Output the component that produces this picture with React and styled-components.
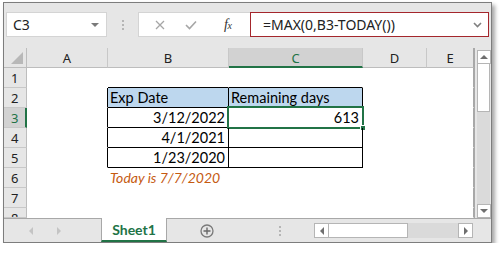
import React from 'react';
import styled, { createGlobalStyle, css } from 'styled-components';

const GlobalStyle = createGlobalStyle`
  html, body {
    margin: 0;
    padding: 0;
    background: #ffffff;
  }
  * {
    box-sizing: border-box;
  }
`;

const GREEN = '#217346';
const HDR = '#e6e6e6';

const Window = styled.div`
  margin: 2px 0 0 3px;
  width: 489px;
  height: 241px;
  border: 1px solid #7d7d7d;
  background: ${HDR};
  box-shadow: 3px 3px 4px rgba(0, 0, 0, 0.35);
  display: flex;
  flex-direction: column;
  overflow: hidden;
  font-family: 'Noto Sans', 'Open Sans', sans-serif;
`;

// Formula bar
const FormulaBar = styled.div`
  height: 45px;
  flex: none;
  display: flex;
  align-items: flex-start;
  padding: 9px 1px 0 2px;
`;

const NameBox = styled.div`
  width: 101px;
  height: 25px;
  background: #fff;
  border: 1px solid #d4d4d4;
  display: flex;
  align-items: center;
  justify-content: space-between;
  padding: 0 7px 0 6px;
  font-size: 14px;
  color: #222;
`;

const Caret = styled.span`
  width: 0;
  height: 0;
  border-left: 4px solid transparent;
  border-right: 4px solid transparent;
  border-top: 4px solid #7a7a7a;
`;

const Grip = styled.div`
  width: 31px;
  height: 25px;
  display: flex;
  flex-direction: column;
  align-items: center;
  justify-content: center;
  gap: 2px;
  span {
    width: 2px;
    height: 2px;
    background: #b5b5b5;
  }
`;

const ActionBox = styled.div`
  width: 112px;
  height: 25px;
  background: #fff;
  border: 1px solid #d4d4d4;
  border-right: none;
  display: flex;
  align-items: center;
  padding-left: 16px;
  gap: 20px;
`;

const Fx = styled.span`
  font-family: 'Liberation Serif', serif;
  font-style: italic;
  font-size: 14px;
  color: #333;
  margin-left: 7px;
  letter-spacing: -0.5px;
  small {
    font-size: 10px;
  }
`;

const FormulaInput = styled.div`
  width: 239px;
  height: 25px;
  background: #fff;
  border: 1px solid #a4262c;
  display: flex;
  align-items: center;
  justify-content: space-between;
  padding: 0 6px 0 12px;
  font-size: 14px;
  color: #222;
`;

// Grid
const Main = styled.div`
  height: 170px;
  flex: none;
  display: flex;
`;

const Sheet = styled.div`
  width: 470px;
  flex: none;
  display: grid;
  grid-template-columns: 23px 81px 121px 134px 64px 47px;
  grid-template-rows: 20px repeat(7, 20px) 10px;
  background: #fff;
  overflow: hidden;
`;

const Corner = styled.div`
  background: ${HDR};
  border-right: 1px solid #bdbdbd;
  border-bottom: 1px solid #bdbdbd;
  position: relative;
  &::after {
    content: '';
    position: absolute;
    right: 3px;
    bottom: 3px;
    width: 0;
    height: 0;
    border-left: 12px solid transparent;
    border-bottom: 12px solid #b8b8b8;
  }
`;

const ColHead = styled.div`
  background: ${p => (p.$active ? '#d2d2d2' : HDR)};
  border-right: 1px solid ${p => (p.$last ? '#a8a8a8' : '#c8c8c8')};
  border-bottom: ${p => (p.$active ? `2px solid ${GREEN}` : '1px solid #bdbdbd')};
  color: ${p => (p.$active ? GREEN : '#222')};
  font-size: 13px;
  display: flex;
  align-items: center;
  justify-content: center;
  padding-top: 1px;
`;

const RowHead = styled.div`
  background: ${p => (p.$active ? '#d2d2d2' : HDR)};
  border-right: ${p => (p.$active ? `2px solid ${GREEN}` : '1px solid #bdbdbd')};
  border-bottom: 1px solid #c8c8c8;
  color: ${p => (p.$active ? GREEN : '#222')};
  font-size: 13px;
  line-height: 16px;
  display: flex;
  align-items: flex-start;
  padding: 2px 0 0 7px;
  overflow: hidden;
`;

const Cell = styled.div`
  position: relative;
  border-right: 1px solid ${p => (p.$r ? '#000' : p.$edge ? '#a8a8a8' : 'transparent')};
  border-bottom: 1px solid ${p => (p.$b ? '#000' : 'transparent')};
  background: ${p => (p.$fill ? '#bdd7ee' : 'transparent')};
  font-family: 'Lato', 'Liberation Sans', sans-serif;
  font-size: 14.5px;
  color: #000;
  display: flex;
  align-items: flex-end;
  justify-content: ${p => (p.$num ? 'flex-end' : 'flex-start')};
  padding: 0 3px 1px 2px;
  white-space: nowrap;
  line-height: 17px;
  ${p =>
    p.$note &&
    css`
      font-style: italic;
      font-size: 14px;
      color: #c55a11;
      overflow: visible;
    `}
`;

const Selection = styled.div`
  position: absolute;
  top: -2px;
  left: -2px;
  right: -2px;
  bottom: -2px;
  border: 2px solid ${GREEN};
  pointer-events: none;
`;

const FillHandle = styled.div`
  position: absolute;
  right: -4px;
  bottom: -4px;
  width: 6px;
  height: 6px;
  background: ${GREEN};
  border: 1px solid #fff;
`;

// Vertical scrollbar
const VScroll = styled.div`
  width: 17px;
  flex: none;
  border-left: 1px solid #a8a8a8;
  padding: 2px 1px 0 2px;
  display: flex;
  flex-direction: column;
`;

const ScrollBtn = styled.div`
  width: 14px;
  height: 14px;
  flex: none;
  background: #fff;
  border: 1px solid #b5b5b5;
  display: flex;
  align-items: center;
  justify-content: center;
`;

const VThumb = styled.div`
  height: 48px;
  flex: none;
  background: #fff;
  border: 1px solid #b5b5b5;
  border-top: none;
`;

const VTrack = styled.div`
  flex: 1;
  background: #dadada;
`;

const Arrow = styled.span`
  width: 0;
  height: 0;
  ${p =>
    p.$dir === 'up' &&
    css`
      border-left: 4px solid transparent;
      border-right: 4px solid transparent;
      border-bottom: 4px solid #6f6f6f;
    `}
  ${p =>
    p.$dir === 'down' &&
    css`
      border-left: 4px solid transparent;
      border-right: 4px solid transparent;
      border-top: 4px solid #6f6f6f;
    `}
  ${p =>
    p.$dir === 'left' &&
    css`
      border-top: 4px solid transparent;
      border-bottom: 4px solid transparent;
      border-right: 4px solid ${p.$light ? '#c4c4c4' : '#6f6f6f'};
    `}
  ${p =>
    p.$dir === 'right' &&
    css`
      border-top: 4px solid transparent;
      border-bottom: 4px solid transparent;
      border-left: 4px solid ${p.$light ? '#c4c4c4' : '#6f6f6f'};
    `}
`;

// Tab bar
const TabBar = styled.div`
  height: 24px;
  flex: none;
  border-top: 1px solid #a8a8a8;
  display: flex;
  align-items: stretch;
`;

const TabNav = styled.div`
  width: 97px;
  flex: none;
  display: flex;
  align-items: center;
  padding-left: 25px;
  gap: 24px;
`;

const Tab = styled.div`
  width: 66px;
  flex: none;
  margin-top: -1px;
  background: #fff;
  border-left: 1px solid #a8a8a8;
  border-right: 1px solid #a8a8a8;
  border-bottom: 2px solid ${GREEN};
  color: ${GREEN};
  font-family: 'Lato', 'Liberation Sans', sans-serif;
  font-weight: 700;
  font-size: 14px;
  display: flex;
  align-items: center;
  justify-content: center;
  padding-top: 1px;
`;

const AddSheet = styled.div`
  width: 80px;
  flex: none;
  display: flex;
  align-items: center;
  padding-left: 33px;
`;

const HGrip = styled.div`
  width: 67px;
  flex: none;
  display: flex;
  flex-direction: column;
  align-items: center;
  justify-content: center;
  gap: 2px;
  padding-right: 2px;
  span {
    width: 2px;
    height: 2px;
    background: #b5b5b5;
  }
`;

const HScroll = styled.div`
  width: 159px;
  height: 15px;
  flex: none;
  align-self: center;
  display: flex;
`;

const HBtn = styled(ScrollBtn)`
  width: 15px;
  height: 15px;
`;

const HThumb = styled.div`
  width: 79px;
  background: #fff;
  border: 1px solid #b5b5b5;
  border-left: none;
`;

const HTrack = styled.div`
  flex: 1;
  background: #dadada;
`;

const cols = ['A', 'B', 'C', 'D', 'E'];

const rows = [
  [null, null, null, null, null],
  [null, { t: 'Exp Date', fill: true }, { t: 'Remaining days', fill: true }, null, null],
  [null, { t: '3/12/2022', num: true }, { t: '613', num: true, sel: true }, null, null],
  [null, { t: '4/1/2021', num: true }, {}, null, null],
  [null, { t: '1/23/2020', num: true }, {}, null, null],
  [null, { t: 'Today is 7/7/2020', note: true }, null, null, null],
  [null, null, null, null, null],
  [null, null, null, null, null],
];

// table B2:C5 lives in rows 1..4 (0-based), cols 1..2
const inTable = (r, c) => r >= 1 && r <= 4 && c >= 1 && c <= 2;

const App = () => (
  <>
    <GlobalStyle />
    <Window>
      <FormulaBar>
        <NameBox>
          C3
          <Caret />
        </NameBox>
        <Grip>
          <span />
          <span />
          <span />
        </Grip>
        <ActionBox>
          <svg width="10" height="10" viewBox="0 0 10 10">
            <path d="M1 1 L9 9 M9 1 L1 9" stroke="#a6a6a6" strokeWidth="1.3" fill="none" />
          </svg>
          <svg width="12" height="10" viewBox="0 0 12 10">
            <path d="M1 5 L4.5 8.5 L11 1.5" stroke="#a6a6a6" strokeWidth="1.6" fill="none" />
          </svg>
          <Fx>
            f<small>x</small>
          </Fx>
        </ActionBox>
        <FormulaInput>
          =MAX(0,B3-TODAY())
          <svg width="9" height="6" viewBox="0 0 9 6">
            <path d="M1 1 L4.5 4.5 L8 1" stroke="#808080" strokeWidth="1.6" fill="none" />
          </svg>
        </FormulaInput>
      </FormulaBar>

      <Main>
        <Sheet>
          <Corner />
          {cols.map((c, i) => (
            <ColHead key={c} $active={c === 'C'} $last={i === cols.length - 1}>
              {c}
            </ColHead>
          ))}
          {rows.map((row, r) => (
            <React.Fragment key={r}>
              <RowHead $active={r === 2}>{r + 1}</RowHead>
              {row.map((cell, c) => {
                const d = cell || {};
                const table = inTable(r, c);
                return (
                  <Cell
                    key={c}
                    $r={table || (c === 0 && r >= 1 && r <= 4)}
                    $b={table || (r === 0 && (c === 1 || c === 2))}
                    $edge={c === 4}
                    $fill={d.fill}
                    $num={d.num}
                    $note={d.note}
                  >
                    {d.t}
                    {d.sel && (
                      <Selection>
                        <FillHandle />
                      </Selection>
                    )}
                  </Cell>
                );
              })}
            </React.Fragment>
          ))}
        </Sheet>
        <VScroll>
          <ScrollBtn>
            <Arrow $dir="up" />
          </ScrollBtn>
          <VThumb />
          <VTrack />
          <ScrollBtn>
            <Arrow $dir="down" />
          </ScrollBtn>
        </VScroll>
      </Main>

      <TabBar>
        <TabNav>
          <Arrow $dir="left" $light />
          <Arrow $dir="right" $light />
        </TabNav>
        <Tab>Sheet1</Tab>
        <AddSheet>
          <svg width="14" height="14" viewBox="0 0 14 14">
            <circle cx="7" cy="7" r="6" stroke="#7a7a7a" strokeWidth="1.3" fill="none" />
            <path d="M7 3.5 V10.5 M3.5 7 H10.5" stroke="#6a6a6a" strokeWidth="1.4" />
          </svg>
        </AddSheet>
        <HGrip>
          <span />
          <span />
          <span />
        </HGrip>
        <HScroll>
          <HBtn>
            <Arrow $dir="left" />
          </HBtn>
          <HThumb />
          <HTrack />
          <HBtn>
            <Arrow $dir="right" />
          </HBtn>
        </HScroll>
      </TabBar>
    </Window>
  </>
);

export default App;
